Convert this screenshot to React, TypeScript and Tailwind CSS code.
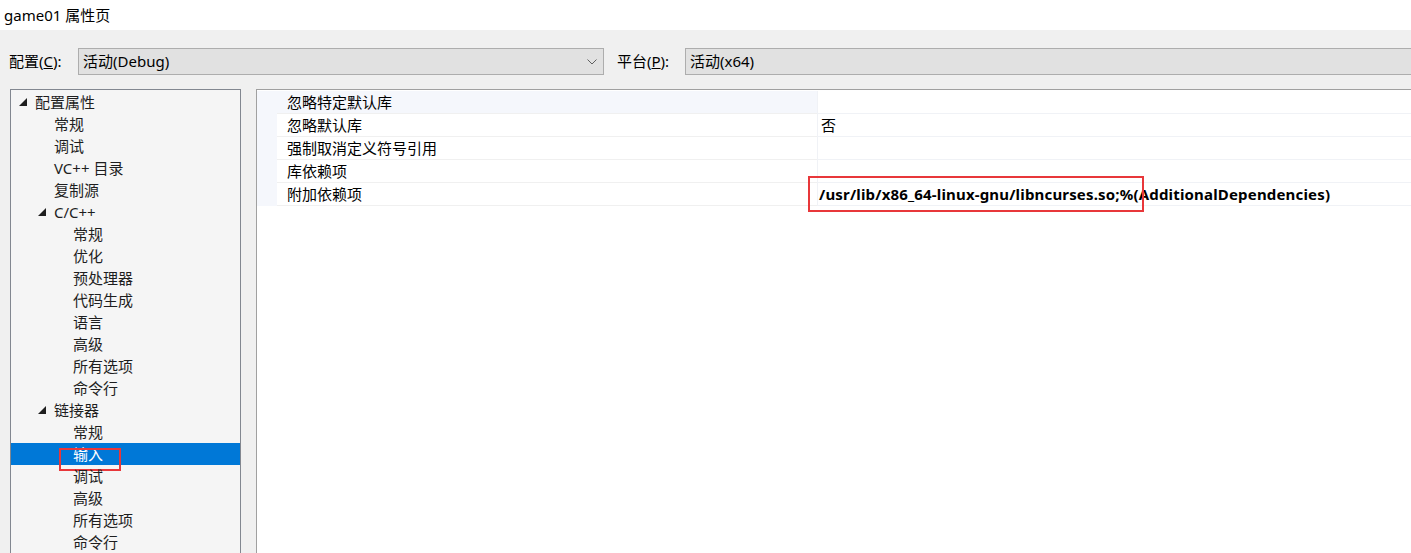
import React from 'react';

const font = { fontFamily: '"Noto Sans", "Noto Sans CJK SC", sans-serif' };

type Node = { label: string; level: number; open?: boolean; selected?: boolean };

const tree: Node[] = [
  { label: '配置属性', level: 0, open: true },
  { label: '常规', level: 1 },
  { label: '调试', level: 1 },
  { label: 'VC++ 目录', level: 1 },
  { label: '复制源', level: 1 },
  { label: 'C/C++', level: 1, open: true },
  { label: '常规', level: 2 },
  { label: '优化', level: 2 },
  { label: '预处理器', level: 2 },
  { label: '代码生成', level: 2 },
  { label: '语言', level: 2 },
  { label: '高级', level: 2 },
  { label: '所有选项', level: 2 },
  { label: '命令行', level: 2 },
  { label: '链接器', level: 1, open: true },
  { label: '常规', level: 2 },
  { label: '输入', level: 2, selected: true },
  { label: '调试', level: 2 },
  { label: '高级', level: 2 },
  { label: '所有选项', level: 2 },
  { label: '命令行', level: 2 },
];

const props = [
  { name: '忽略特定默认库', value: '' },
  { name: '忽略默认库', value: '否' },
  { name: '强制取消定义符号引用', value: '' },
  { name: '库依赖项', value: '' },
  { name: '附加依赖项', value: '/usr/lib/x86_64-linux-gnu/libncurses.so;%(AdditionalDependencies)', bold: true },
];

const Triangle = () => (
  <svg width="8" height="8" viewBox="0 0 8 8" className="shrink-0">
    <polygon points="8,0 8,8 0,8" fill="#1e1e1e" />
  </svg>
);

const Chevron = () => (
  <svg width="10" height="6" viewBox="0 0 10 6" className="shrink-0">
    <polyline points="0.5,0.5 5,5 9.5,0.5" fill="none" stroke="#606060" strokeWidth="1" />
  </svg>
);

const App: React.FC = () => {
  return (
    <div className="w-[1411px] h-[553px] overflow-hidden flex flex-col bg-[#f0f0f0] text-[15px] text-[#1e1e1e]" style={font}>
      {/* 标题栏 */}
      <div className="h-[30px] bg-white flex items-center pl-[4px] text-[15px] text-black shrink-0">
        game01 属性页
      </div>

      {/* 配置 / 平台 */}
      <div className="flex items-center pt-[18px] shrink-0">
        <span className="w-[78px] pl-[9px] text-black">
          配置(<span className="underline">C</span>):
        </span>
        <div className="w-[526px] h-[27px] bg-[#e1e1e1] border border-[#adadad] flex items-center justify-between pl-[4px] pr-[6px]">
          <span className="text-black">活动(Debug)</span>
          <Chevron />
        </div>
        <span className="w-[81px] pl-[13px] text-black">
          平台(<span className="underline">P</span>):
        </span>
        <div className="flex-1 h-[27px] bg-[#e1e1e1] border border-r-0 border-[#adadad] flex items-center pl-[4px]">
          <span className="text-black">活动(x64)</span>
        </div>
      </div>

      {/* 主体 */}
      <div className="flex flex-1 mt-[14px] pl-[10px] gap-[15px] min-h-0">
        {/* 树 */}
        <div className="w-[231px] shrink-0 bg-[#f5f5f5] border border-b-0 border-[#828790] pt-[1px] overflow-hidden">
          {tree.map((n, i) => (
            <div
              key={i}
              className={`relative h-[22px] flex items-center ${n.selected ? 'bg-[#0078d7] text-white' : ''}`}
            >
              <div className="flex items-center" style={{ paddingLeft: 8 + n.level * 19 }}>
                <div className="w-[16px] flex items-center">{n.open ? <Triangle /> : null}</div>
                <span className="leading-none whitespace-pre">{n.label}</span>
              </div>
              {n.selected && (
                <div className="absolute left-[48px] top-[5px] w-[62px] h-[23px] border-2 border-[#e8373a] pointer-events-none" />
              )}
            </div>
          ))}
        </div>

        {/* 属性网格 */}
        <div className="flex-1 bg-white border-t border-l border-[#a0a0a0] pt-[1px]">
          {props.map((p, i) => (
            <div key={i} className="flex h-[23px] text-black">
              <div className="w-[20px] shrink-0 bg-[#f5f7fc]" />
              <div
                className={`w-[540px] shrink-0 flex items-center pl-[10px] border-b border-[#f0f0f0] ${i === 0 ? 'bg-[#f5f7fc]' : ''}`}
              >
                {p.name}
              </div>
              <div className="relative flex-1 flex items-center pl-[1px] border-b border-l border-[#f0f2f6]">
                <span className={p.bold ? 'font-bold tracking-[0.17px]' : 'pl-[2px]'}>{p.value}</span>
                {p.bold && (
                  <div className="absolute left-[-10px] top-[-7px] w-[336px] h-[36px] border-2 border-[#e8373a] pointer-events-none" />
                )}
              </div>
            </div>
          ))}
        </div>
      </div>
    </div>
  );
};

export default App;
